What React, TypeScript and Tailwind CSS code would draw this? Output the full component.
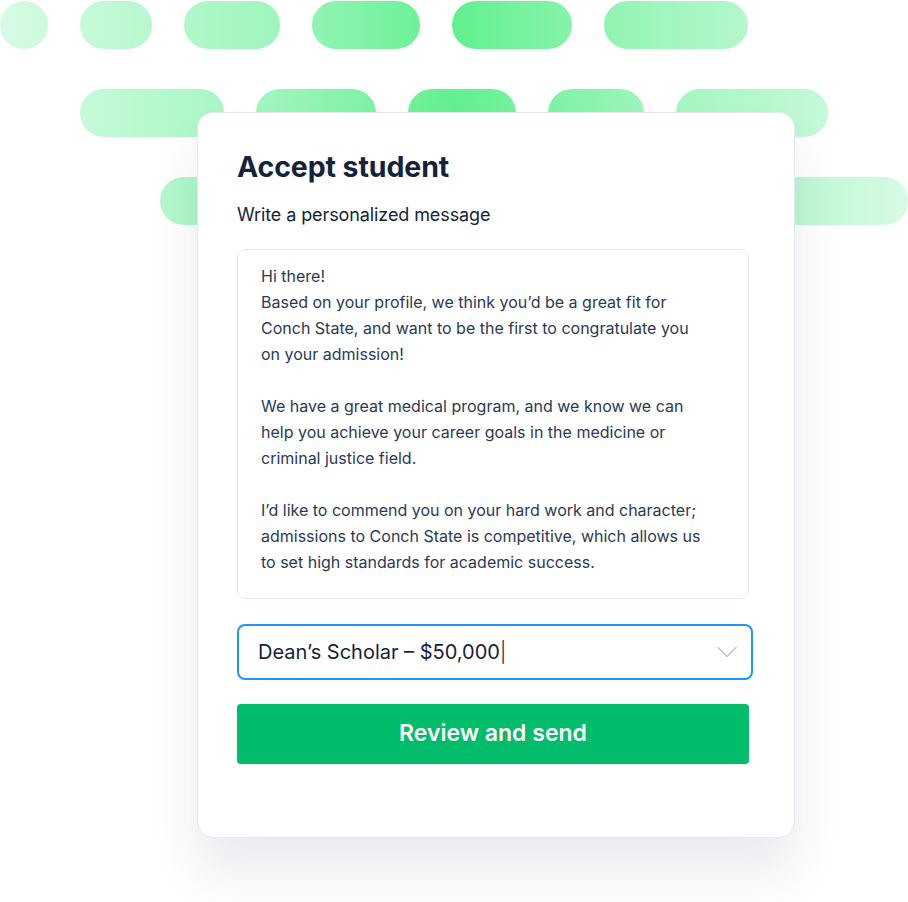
import { ChevronDown } from 'lucide-react';

const pill = 'h-12 shrink-0 rounded-full bg-fixed bg-[linear-gradient(90deg,#d6fbe4_0%,#9ff5bd_30%,#62f08f_50%,#9ff5bd_72%,#d6fbe4_100%)]';

const message = [
  ['Hi there!', 'Based on your profile, we think you’d be a great fit for', 'Conch State, and want to be the first to congratulate you', 'on your admission!'],
  ['We have a great medical program, and we know we can', 'help you achieve your career goals in the medicine or', 'criminal justice field.'],
  ['I’d like to commend you on your hard work and character;', 'admissions to Conch State is competitive, which allows us', 'to set high standards for academic success.'],
];

export default function App() {
  return (
    <div className="min-h-[902px] w-[908px] overflow-hidden bg-white font-['Inter',sans-serif] text-[#14233c]">
      {/* decorative pills */}
      <div className="flex flex-col gap-10 pt-px">
        <div className="flex gap-8">
          <div className={`${pill} w-12`} />
          <div className={`${pill} w-[72px]`} />
          <div className={`${pill} w-24`} />
          <div className={`${pill} w-[108px]`} />
          <div className={`${pill} w-[120px]`} />
          <div className={`${pill} w-36`} />
        </div>
        <div className="flex gap-8 pl-20">
          <div className={`${pill} w-36`} />
          <div className={`${pill} w-[120px]`} />
          <div className={`${pill} w-[108px]`} />
          <div className={`${pill} w-24`} />
          <div className={`${pill} w-[152px]`} />
        </div>
        <div className="flex gap-8 pl-40">
          <div className={`${pill} w-[120px]`} />
          <div className={`${pill} w-[150px]`} />
          <div className={`${pill} w-[140px]`} />
          <div className={`${pill} w-[242px]`} />
        </div>
      </div>

      {/* card */}
      <div className="relative z-10 ml-[197px] -mt-[113px] w-[598px] rounded-2xl border border-[#e4e8f3] bg-white px-[39px] pt-[37px] pb-[73px] shadow-[0_34px_50px_rgba(25,35,90,0.09)]">
        <h1 className="text-[28.5px] leading-[34px] font-bold tracking-[-0.1px]">Accept student</h1>
        <p className="mt-[19px] text-[18px] leading-6 tracking-[-0.1px]">Write a personalized message</p>

        <div className="mt-[22px] h-[350px] w-[512px] rounded-lg border border-[#e6eaf2] pl-[23px] pt-[13px] text-[16px] leading-[26px] text-[#2b3a55]">
          {message.map((para, i) => (
            <div key={i} className={i > 0 ? 'mt-[26px]' : ''}>
              {para.map((line) => (
                <div key={line}>{line}</div>
              ))}
            </div>
          ))}
        </div>

        <div className="mt-[25px] flex h-14 w-[516px] items-center justify-between rounded-lg border-2 border-[#2196f3] pl-[19px] pr-1.5">
          <span className="text-[20px]">
            Dean’s Scholar – $50,000<span className="font-light text-[#14233c]">|</span>
          </span>
          <ChevronDown size={36} strokeWidth={1} className="text-[#b9c4d6]" />
        </div>

        <button className="mt-6 flex h-[60px] w-[512px] items-center justify-center rounded border-b border-[#00b466] bg-[#00bc6b] text-[23px] font-semibold text-white">
          Review and send
        </button>
      </div>
    </div>
  );
}
